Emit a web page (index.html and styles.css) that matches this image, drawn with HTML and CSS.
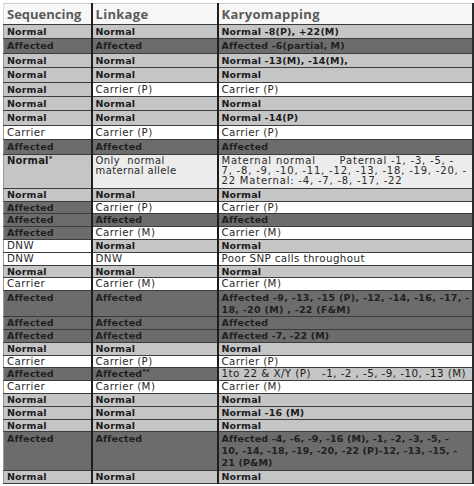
FILE: index.html
```html
<!DOCTYPE html>
<html>
<head>
<meta charset="utf-8">
<link rel="stylesheet" href="styles.css">
</head>
<body>
<table class="grid">
  <colgroup><col class="c1"><col class="c2"><col class="c3"></colgroup>
  <thead>
    <tr><th>Sequencing</th><th>Linkage</th><th>Karyomapping</th></tr>
  </thead>
  <tbody>
    <tr class="big"><td class="lt b">Normal</td><td class="lt b">Normal</td><td class="lt b">Normal -8(P), +22(M)</td></tr>
    <tr class="big"><td class="dk b">Affected</td><td class="dk b">Affected</td><td class="dk b">Affected -6(partial, M)</td></tr>
    <tr class="big"><td class="lt b">Normal</td><td class="lt b">Normal</td><td class="lt b">Normal -13(M), -14(M),</td></tr>
    <tr class="big"><td class="lt b">Normal</td><td class="lt b">Normal</td><td class="lt b">Normal</td></tr>
    <tr class="big"><td class="lt b">Normal</td><td class="wh">Carrier (P)</td><td class="wh">Carrier (P)</td></tr>
    <tr class="big"><td class="lt b">Normal</td><td class="lt b">Normal</td><td class="lt b">Normal</td></tr>
    <tr class="big"><td class="lt b">Normal</td><td class="lt b">Normal</td><td class="lt b">Normal -14(P)</td></tr>
    <tr class="big"><td class="wh">Carrier</td><td class="wh">Carrier (P)</td><td class="wh">Carrier (P)</td></tr>
    <tr class="big"><td class="dk b">Affected</td><td class="dk b">Affected</td><td class="dk b">Affected</td></tr>
    <tr class="three"><td class="lt b">Normal<sup>*</sup></td><td class="pl">Only&nbsp; normal<br>maternal allele</td><td class="pl spread">Maternal normal&nbsp;&nbsp;&nbsp;&nbsp;&nbsp; Paternal -1, -3, -5, -<br>7, -8, -9, -10, -11, -12, -13, -18, -19, -20, -<br>22 Maternal: -4, -7, -8, -17, -22</td></tr>
    <tr><td class="lt b">Normal</td><td class="lt b">Normal</td><td class="lt b">Normal</td></tr>
    <tr><td class="dk b">Affected</td><td class="wh">Carrier (P)</td><td class="wh">Carrier (P)</td></tr>
    <tr><td class="dk b">Affected</td><td class="dk b">Affected</td><td class="dk b">Affected</td></tr>
    <tr><td class="dk b">Affected</td><td class="wh">Carrier (M)</td><td class="wh">Carrier (M)</td></tr>
    <tr><td class="wh">DNW</td><td class="lt b">Normal</td><td class="lt b">Normal</td></tr>
    <tr><td class="wh">DNW</td><td class="wh">DNW</td><td class="wh">Poor SNP calls throughout</td></tr>
    <tr><td class="lt b">Normal</td><td class="lt b">Normal</td><td class="lt b">Normal</td></tr>
    <tr><td class="wh">Carrier</td><td class="wh">Carrier (M)</td><td class="wh">Carrier (M)</td></tr>
    <tr class="two"><td class="dk b">Affected</td><td class="dk b">Affected</td><td class="dk b wide">Affected -9, -13, -15 (P), -12, -14, -16, -17, -<br>18, -20 (M) , -22 (F&amp;M)</td></tr>
    <tr><td class="dk b">Affected</td><td class="dk b">Affected</td><td class="dk b">Affected</td></tr>
    <tr><td class="dk b">Affected</td><td class="dk b">Affected</td><td class="dk b">Affected -7, -22 (M)</td></tr>
    <tr><td class="lt b">Normal</td><td class="lt b">Normal</td><td class="lt b">Normal</td></tr>
    <tr><td class="wh">Carrier</td><td class="wh">Carrier (P)</td><td class="wh">Carrier (P)</td></tr>
    <tr><td class="dk b">Affected</td><td class="dk b">Affected<sup>**</sup></td><td class="lt tight">1to 22 &amp; X/Y (P)&nbsp;&nbsp; -1, -2 , -5, -9, -10, -13 (M)</td></tr>
    <tr><td class="wh">Carrier</td><td class="wh">Carrier (M)</td><td class="wh">Carrier (M)</td></tr>
    <tr><td class="lt b">Normal</td><td class="lt b">Normal</td><td class="lt b">Normal</td></tr>
    <tr><td class="lt b">Normal</td><td class="lt b">Normal</td><td class="lt b">Normal -16 (M)</td></tr>
    <tr><td class="lt b">Normal</td><td class="lt b">Normal</td><td class="lt b">Normal</td></tr>
    <tr class="tall"><td class="dk b">Affected</td><td class="dk b">Affected</td><td class="dk b">Affected -4, -6, -9, -16 (M), -1, -2, -3, -5, -<br>10, -14, -18, -19, -20, -22 (P)-12, -13, -15, -<br>21 (P&amp;M)</td></tr>
    <tr><td class="lt b">Normal</td><td class="lt b">Normal</td><td class="lt b">Normal</td></tr>
  </tbody>
</table>
</body>
</html>
```

FILE: styles.css
```css
html, body {
  margin: 0;
  padding: 0;
  background: #ffffff;
}

body {
  padding: 3px 0 0 3px;
  font-family: "DejaVu Sans", "Liberation Sans", sans-serif;
  color: #1c1c1c;
}

.grid {
  border-collapse: collapse;
  table-layout: fixed;
  width: 469px;
  border-right: 2px solid #2a2a2a;
}

.c1 { width: 88px; }
.c2 { width: 126px; }
.c3 { width: 255px; }

.grid th {
  height: 20px;
  padding: 0 3px;
  text-align: left;
  font-family: "Open Sans", "Liberation Sans", sans-serif;
  font-weight: 700;
  font-size: 13px;
  letter-spacing: 0.3px;
  color: #5a5a5a;
  background: #f6f6f6;
  border-top: 1px solid #cfcfcf;
  border-bottom: 1px solid #3a3a3a;
  border-left: 2px solid #1e1e1e;
  white-space: nowrap;
  overflow: hidden;
}

.grid th:first-child {
  border-left: 1px solid #d8d8d8;
  letter-spacing: 0;
}

.grid td {
  padding: 1px 3px;
  font-size: 10.3px;
  line-height: 9.8px;
  vertical-align: top;
  white-space: nowrap;
  overflow: hidden;
  border-bottom: 1px solid #3c3c3c;
  border-left: 2px solid #1e1e1e;
  letter-spacing: 0.4px;
}

.grid td:first-child {
  border-left: 1px solid #9a9a9a;
}

.grid tr.big td { line-height: 11.4px; }
.grid tr.three td { line-height: 10.4px; font-size: 10px; }
.grid tr.two td { line-height: 11.5px; }
.grid tr.tall td { line-height: 12px; }

.grid sup {
  font-size: 7px;
  line-height: 0;
  vertical-align: 3px;
}

.grid td.b {
  font-weight: 700;
  font-size: 9.5px;
  letter-spacing: 0.15px;
}

.grid td.wide { letter-spacing: 0.3px; }
.grid td.tight { letter-spacing: 0.45px; font-size: 10.3px; }
.grid td.spread { letter-spacing: 0.8px; }

.lt { background: #c5c5c5; }
.dk { background: #6c6c6c; color: #202020; }
.wh { background: #ffffff; color: #2a2a2a; }
.pl { background: #ececec; color: #2a2a2a; }
```
